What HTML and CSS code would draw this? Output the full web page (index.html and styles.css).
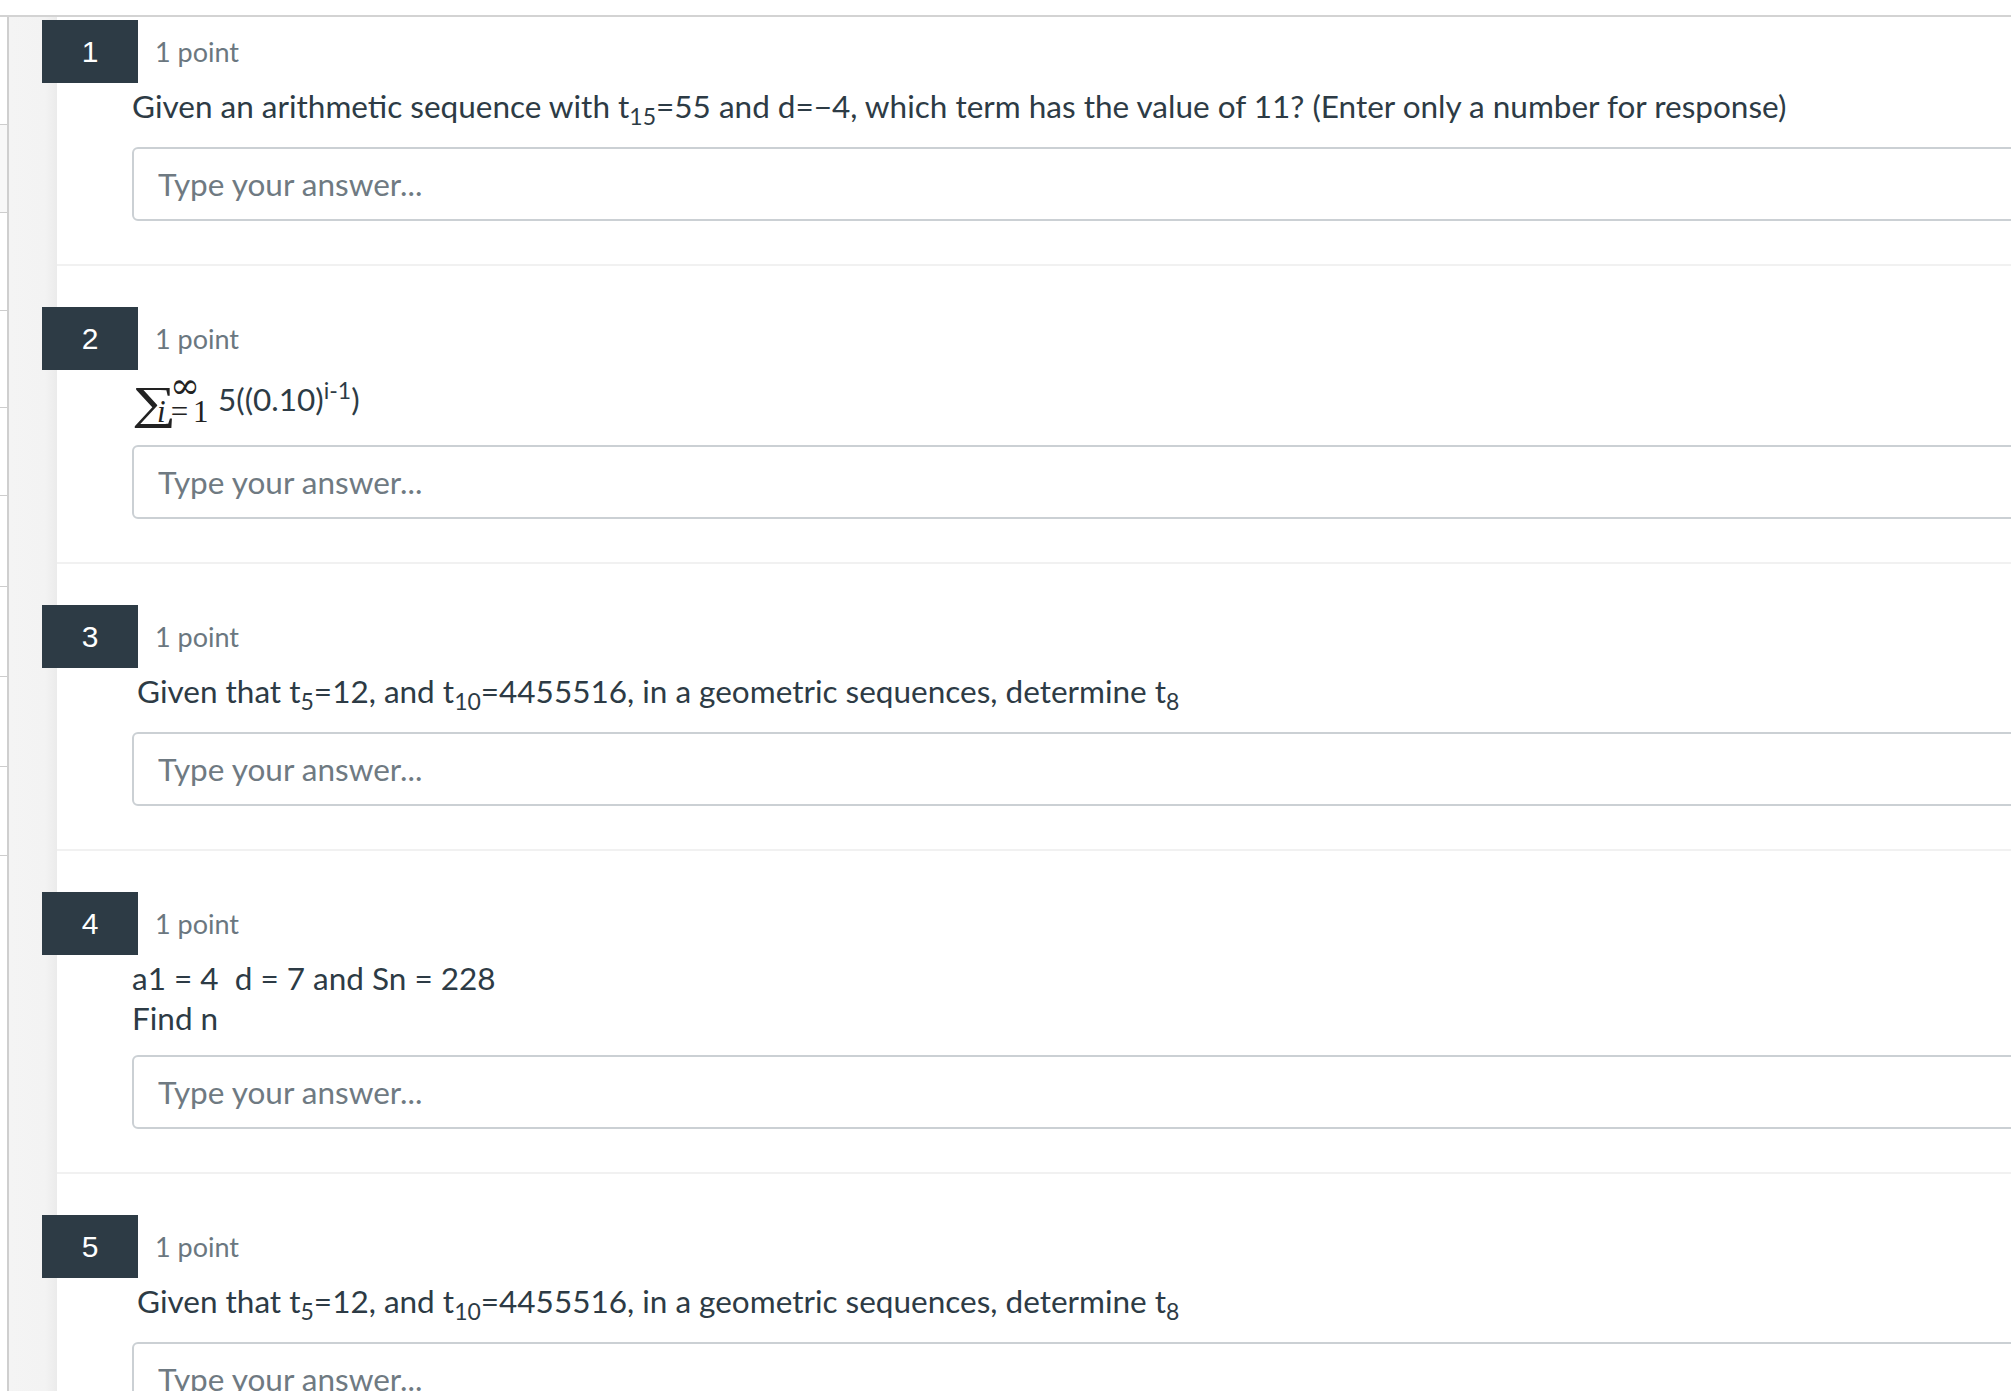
FILE: index.html
```html
<!DOCTYPE html>
<html lang="en">
<head>
<meta charset="utf-8">
<title>Quiz</title>
<link rel="stylesheet" href="styles.css">
</head>
<body>
<div class="page">
  <div class="rail">
    <div class="tick t1"></div>
    <div class="tick t2"></div>
    <div class="tick t3"></div>
    <div class="tick t4"></div>
    <div class="tick t5"></div>
    <div class="tick t6"></div>
    <div class="tick t7"></div>
    <div class="tick t8"></div>
    <div class="tick t9"></div>
  </div>
  <div class="gutter"></div>
  <main class="questions">
    <section class="question question-first">
      <div class="q-head"><div class="q-num">1</div><div class="q-points">1 point</div></div>
      <div class="q-text q-sub">Given an arithmetic sequence with t<sub>15</sub>=55 and d=−4, which term has the value of 11? (Enter only a number for response)</div>
      <input class="q-input" type="text" placeholder="Type your answer...">
    </section>
    <section class="question">
      <div class="q-head"><div class="q-num">2</div><div class="q-points">1 point</div></div>
      <div class="q-text q-math">
        <span class="sum"><span class="sigma">∑</span><span class="lim-top">∞</span><span class="lim-bot"><i>i</i><span class="eq">=</span>1</span></span><span class="expr">5((0.10)<sup>i-1</sup>)</span>
      </div>
      <input class="q-input" type="text" placeholder="Type your answer...">
    </section>
    <section class="question">
      <div class="q-head"><div class="q-num">3</div><div class="q-points">1 point</div></div>
      <div class="q-text q-sub q-indent">Given that t<sub>5</sub>=12, and t<sub>10</sub>=4455516, in a geometric sequences, determine t<sub>8</sub></div>
      <input class="q-input" type="text" placeholder="Type your answer...">
    </section>
    <section class="question">
      <div class="q-head"><div class="q-num">4</div><div class="q-points">1 point</div></div>
      <div class="q-text">a1 = 4 &nbsp;d = 7 and Sn = 228<br>Find n</div>
      <input class="q-input" type="text" placeholder="Type your answer...">
    </section>
    <section class="question">
      <div class="q-head"><div class="q-num">5</div><div class="q-points">1 point</div></div>
      <div class="q-text q-sub q-indent">Given that t<sub>5</sub>=12, and t<sub>10</sub>=4455516, in a geometric sequences, determine t<sub>8</sub></div>
      <input class="q-input" type="text" placeholder="Type your answer...">
    </section>
  </main>
</div>
</body>
</html>
```

FILE: styles.css
```css
html, body {
  margin: 0;
  padding: 0;
  background: #ffffff;
  overflow: hidden;
  height: 100%;
}

body {
  font-family: "Lato", "Liberation Sans", sans-serif;
  color: #2d3b45;
}

.page {
  margin-top: 15px;
  border-top: 2px solid #d3d3d3;
  display: flex;
  min-height: 1400px;
}

.rail {
  width: 7px;
  flex: none;
  border-right: 2px solid #cfcfcf;
  display: flex;
  flex-direction: column;
}

.tick {
  flex: none;
  box-sizing: border-box;
  border-bottom: 1px solid #cdcdcd;
}

.t1 { height: 108px; }
.t2 { height: 88px; background: #f8f8f8; }
.t3 { height: 98px; }
.t4 { height: 97px; }
.t5 { height: 88px; }
.t6 { height: 91px; }
.t7 { height: 90px; }
.t8 { height: 90px; }
.t9 { height: 89px; }

.gutter {
  width: 48px;
  flex: none;
  background: linear-gradient(to right, #f4f4f4 0%, #f3f3f3 75%, #ebebeb 100%);
}

.questions {
  flex: 1;
  min-width: 0;
}

.question {
  padding: 41px 0 43px 75px;
  border-bottom: 2px solid #f1f1f1;
}

.question-first {
  padding-top: 3px;
}

.q-head {
  display: flex;
  align-items: center;
  margin-left: -90px;
}

.q-num {
  width: 96px;
  height: 63px;
  background: #2d3b45;
  color: #ffffff;
  font-family: "Liberation Sans", Arial, sans-serif;
  font-size: 30px;
  display: flex;
  align-items: center;
  justify-content: center;
  flex: none;
}

.q-points {
  margin-left: 17px;
  font-size: 27px;
  color: #6b7780;
}

.q-text {
  margin-top: 3px;
  font-size: 31.5px;
  line-height: 40px;
  color: #2d3b45;
}

.q-sub {
  padding-bottom: 4px;
}

.q-text sub,
.q-text sup {
  font-size: 23px;
  line-height: 0;
}

.q-text sub {
  vertical-align: -7px;
}

.q-text sup {
  vertical-align: 12px;
}

.q-indent {
  padding-left: 5px;
}

.q-math {
  display: flex;
  align-items: center;
  height: 52px;
  margin-top: 3px;
}

/* summation: sigma with scripts laid over its right side */
.sum {
  position: relative;
  display: inline-block;
  flex: none;
  width: 86px;
  height: 52px;
  color: #222222;
  font-family: "Liberation Serif", "DejaVu Serif", serif;
}

.sigma {
  position: absolute;
  left: 0;
  top: 7px;
  font-size: 46px;
  line-height: 46px;
  transform: scaleX(1.35);
  transform-origin: left center;
}

.lim-top {
  position: absolute;
  left: 38px;
  top: 0;
  font-family: "DejaVu Serif", serif;
  font-size: 36px;
  line-height: 26px;
}

.lim-bot {
  position: absolute;
  left: 25px;
  top: 24px;
  font-size: 31px;
  line-height: 30px;
  white-space: nowrap;
}

.lim-bot i {
  font-style: italic;
}

.eq {
  margin: 0 5px;
}

.expr {
  line-height: 40px;
}

.q-input {
  display: block;
  box-sizing: border-box;
  margin-top: 17px;
  width: calc(100% + 200px);
  height: 74px;
  border: 2px solid #cbd0d4;
  border-radius: 6px;
  padding: 0 0 0 24px;
  font-family: "Lato", "Liberation Sans", sans-serif;
  font-size: 31.5px;
  color: #2d3b45;
  background: #ffffff;
  outline: none;
}

.q-math + .q-input {
  margin-top: 20px;
}

.q-input::placeholder {
  color: #6f7a82;
  opacity: 1;
}
```
